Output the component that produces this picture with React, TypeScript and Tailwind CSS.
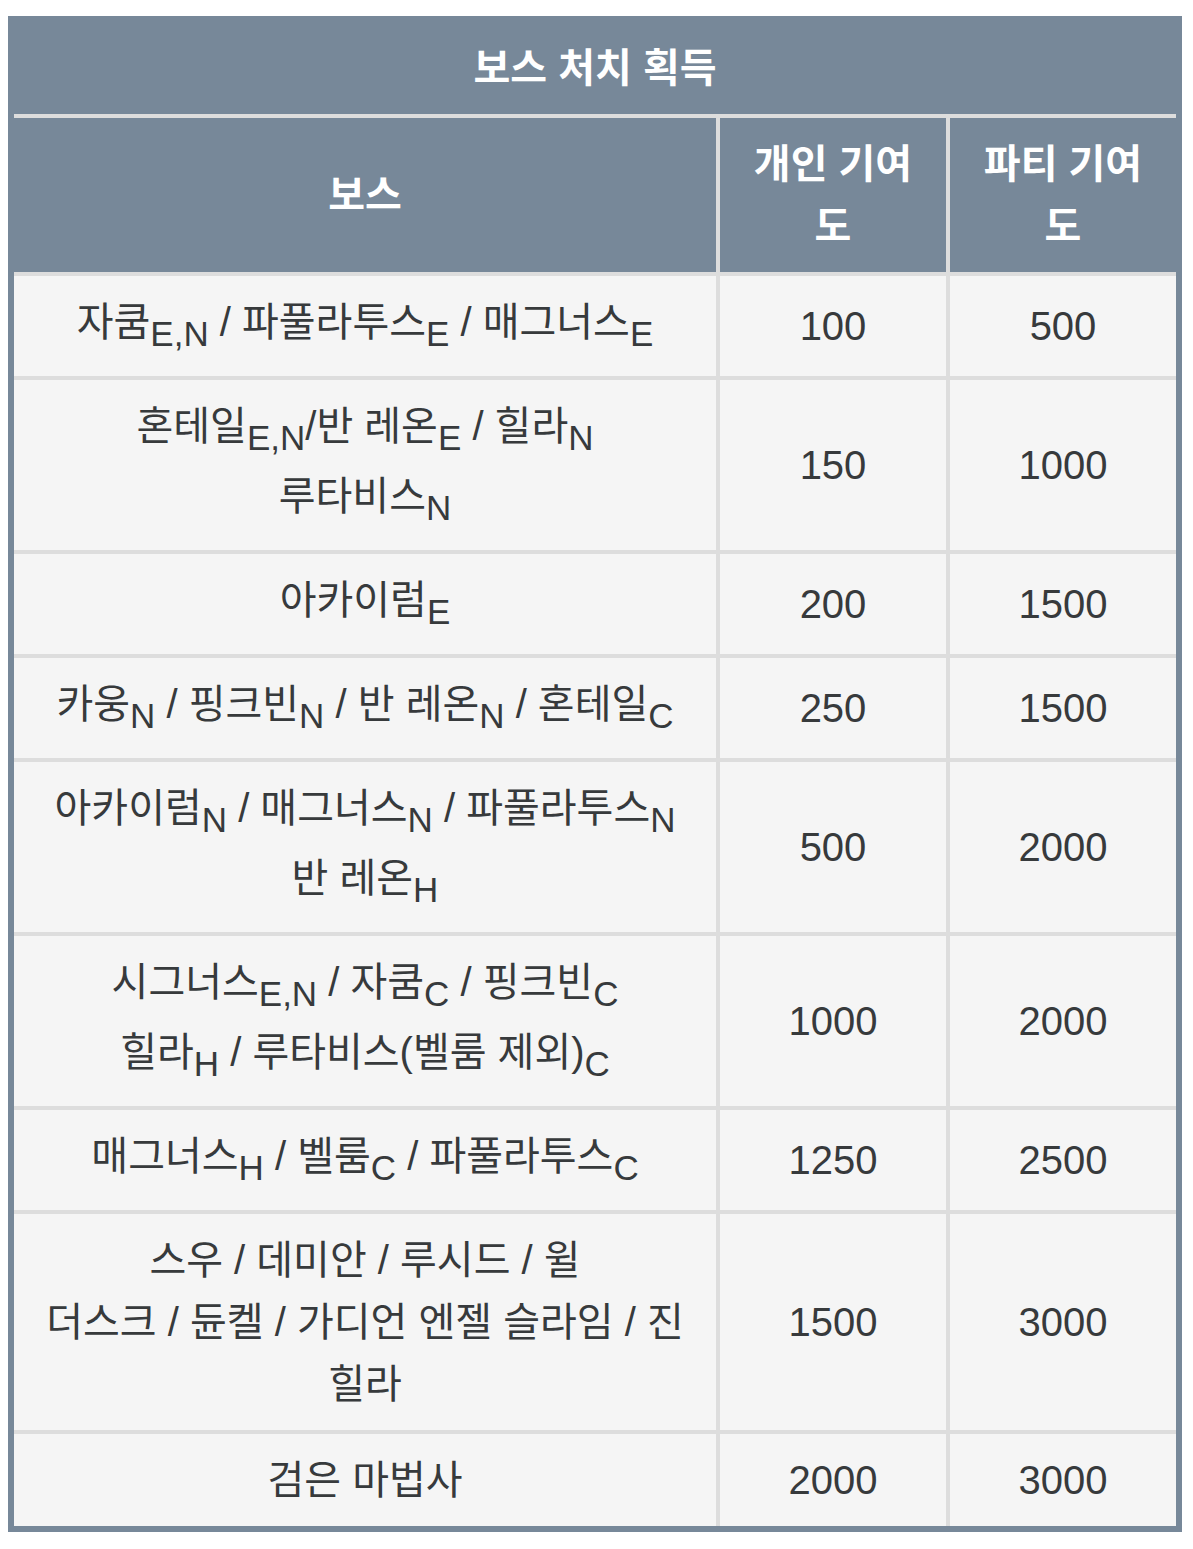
import React from "react";

const S = ({ children }: { children: React.ReactNode }) => (
  <span className="relative top-[4px] align-[-6px] text-[35px]">{children}</span>
);

const Head = ({ children, span }: { children: React.ReactNode; span?: boolean }) => (
  <div
    className={
      "flex items-center justify-center bg-[#778899] px-[20px] py-[15px] text-center font-bold text-white" +
      (span ? " col-span-3" : "")
    }
  >
    <div>{children}</div>
  </div>
);

const Cell = ({ children }: { children: React.ReactNode }) => (
  <div className="flex items-center justify-center bg-[#f5f5f5] px-[20px] py-[15px] text-center text-[#373a3c]">
    <div>{children}</div>
  </div>
);

const rows: [React.ReactNode, string, string][] = [
  [
    <>
      자쿰<S>E,N</S> / 파풀라투스<S>E</S> / 매그너스<S>E</S>
    </>,
    "100",
    "500",
  ],
  [
    <>
      혼테일<S>E,N</S>/반 레온<S>E</S> / 힐라<S>N</S>
      <br />
      루타비스<S>N</S>
    </>,
    "150",
    "1000",
  ],
  [
    <>
      아카이럼<S>E</S>
    </>,
    "200",
    "1500",
  ],
  [
    <>
      카웅<S>N</S> / 핑크빈<S>N</S> / 반 레온<S>N</S> / 혼테일<S>C</S>
    </>,
    "250",
    "1500",
  ],
  [
    <>
      아카이럼<S>N</S> / 매그너스<S>N</S> / 파풀라투스<S>N</S>
      <br />
      반 레온<S>H</S>
    </>,
    "500",
    "2000",
  ],
  [
    <>
      시그너스<S>E,N</S> / 자쿰<S>C</S> / 핑크빈<S>C</S>
      <br />
      힐라<S>H</S> / 루타비스(벨룸 제외)<S>C</S>
    </>,
    "1000",
    "2000",
  ],
  [
    <>
      매그너스<S>H</S> / 벨룸<S>C</S> / 파풀라투스<S>C</S>
    </>,
    "1250",
    "2500",
  ],
  [
    <>
      스우 / 데미안 / 루시드 / 윌
      <br />
      더스크 / 듄켈 / 가디언 엔젤 슬라임 / 진
      <br />
      힐라
    </>,
    "1500",
    "3000",
  ],
  [<>검은 마법사</>, "2000", "3000"],
];

export default function App() {
  return (
    <div className="min-h-[1549px] bg-white pt-4 pl-2">
      <div className="grid w-[1174px] grid-cols-[702px_226px_226px] gap-[4px] border-[6px] border-[#778899] bg-[#dddddd] font-['Liberation_Sans','Noto_Sans_CJK_KR',sans-serif] text-[40px] leading-[62px]">
        <Head span>보스 처치 획득</Head>
        <Head>보스</Head>
        <Head>개인 기여도</Head>
        <Head>파티 기여도</Head>
        {rows.map(([name, a, b], i) => (
          <React.Fragment key={i}>
            <Cell>{name}</Cell>
            <Cell>{a}</Cell>
            <Cell>{b}</Cell>
          </React.Fragment>
        ))}
      </div>
    </div>
  );
}
